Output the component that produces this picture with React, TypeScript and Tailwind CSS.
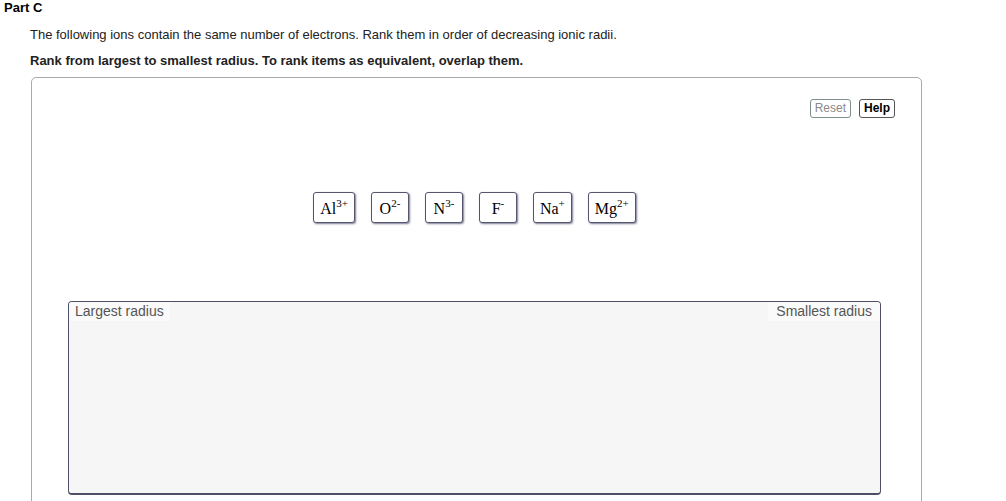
import React from "react";

const ions = [
  { base: "Al", charge: "3+" },
  { base: "O", charge: "2-" },
  { base: "N", charge: "3-" },
  { base: "F", charge: "-" },
  { base: "Na", charge: "+" },
  { base: "Mg", charge: "2+" },
];

function IonTile({ base, charge }: { base: string; charge: string }) {
  return (
    <div className="flex h-[31px] min-w-[38px] items-center justify-center rounded-[3px] border border-[#55556e] bg-white px-[6px] pt-[3px] shadow-[1px_1px_2px_#7a7a95] font-['Liberation_Serif',serif] text-[16px] text-black">
      <span className="leading-none">
        {base}
        <sup className="-top-[7px] text-[11px] leading-none">{charge}</sup>
      </span>
    </div>
  );
}

export default function App() {
  return (
    <div className="h-[501px] w-[1006px] overflow-hidden bg-white font-['Liberation_Sans',Arial,sans-serif] text-black">
      <div className="pl-[4px] pt-[0px] text-[13px] font-bold leading-[15px]">Part C</div>

      <div className="pl-[30px]">
        <p className="mt-[12px] text-[13px] leading-[15px] text-[#222]">
          The following ions contain the same number of electrons. Rank them in order of decreasing ionic radii.
        </p>
        <p className="mt-[11px] text-[13px] font-bold leading-[15px] text-[#222]">
          Rank from largest to smallest radius. To rank items as equivalent, overlap them.
        </p>
      </div>

      <div className="ml-[31px] mt-[9px] h-[440px] w-[891px] rounded-[5px] border border-[#aaaaaa] bg-white">
        <div className="flex justify-end gap-[8px] pr-[26px] pt-[21px]">
          <button className="h-[19px] rounded-[3px] border border-[#7f8f8f] bg-white px-[4px] text-[12px] leading-[15px] text-[#8a8a8a]">
            Reset
          </button>
          <button className="h-[19px] rounded-[3px] border border-[#555] bg-white px-[4px] text-[12px] font-bold leading-[15px] text-black">
            Help
          </button>
        </div>

        <div className="mt-[74px] flex justify-center gap-[16px] pr-[4px]">
          {ions.map((ion) => (
            <IonTile key={ion.base} base={ion.base} charge={ion.charge} />
          ))}
        </div>

        <div className="ml-[36px] mt-[78px] h-[194px] w-[813px] rounded-[4px] border border-b-2 border-[#4e4e66] bg-[#f6f6f6]">
          <div className="flex justify-between">
            <span className="rounded-tl-[3px] bg-[#fafafa] px-[6px] pb-[2px] pt-[1px] text-[14px] leading-[16px] text-[#555]">
              Largest radius
            </span>
            <span className="rounded-tr-[3px] bg-[#fafafa] px-[8px] pb-[2px] pt-[1px] text-[14px] leading-[16px] text-[#555]">
              Smallest radius
            </span>
          </div>
        </div>
      </div>
    </div>
  );
}
